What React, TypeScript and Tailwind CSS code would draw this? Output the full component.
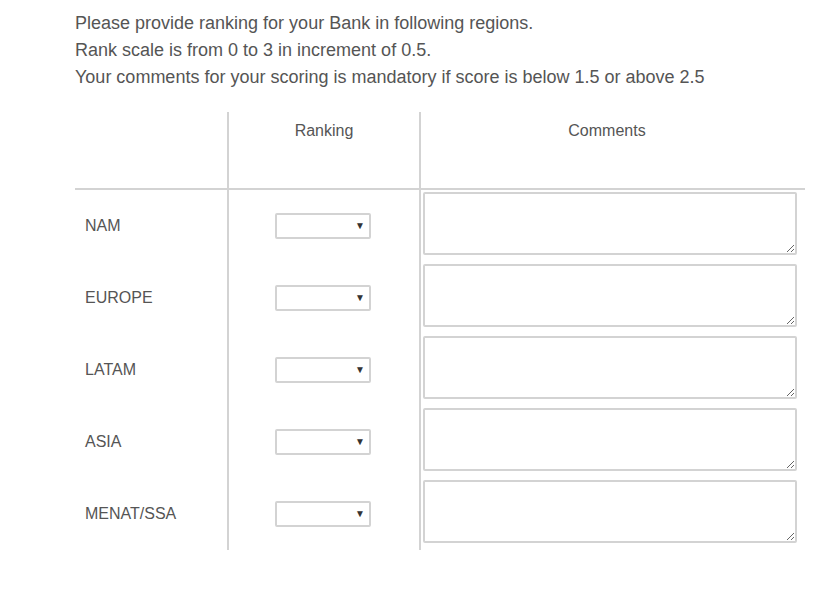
import React from 'react';

const REGIONS = ['NAM', 'EUROPE', 'LATAM', 'ASIA', 'MENAT/SSA'];

export default function App() {
  return (
    <div className="min-h-screen bg-white text-[#555] text-[16px] font-['Liberation_Sans',Arial,sans-serif]">
      <div className="pl-[75px] pt-[10px]">
        {/* Instructions */}
        <div className="text-[18px] leading-[27px]">
          <p>Please provide ranking for your Bank in following regions.</p>
          <p>Rank scale is from 0 to 3 in increment of 0.5.</p>
          <p>Your comments for your scoring is mandatory if score is below 1.5 or above 2.5</p>
        </div>

        {/* Ranking table */}
        <div className="mt-[21px] w-[730px] grid grid-cols-[152px_192px_386px]">
          <div className="h-[78px] border-b-2 border-[#d3d3d3]" />
          <div className="h-[78px] border-b-2 border-l-2 border-[#d3d3d3] pt-[10px] text-center leading-[18px]">
            Ranking
          </div>
          <div className="h-[78px] border-b-2 border-l-2 border-[#d3d3d3] pt-[10px] pr-[12px] text-center leading-[18px]">
            Comments
          </div>

          {REGIONS.map(region => (
            <React.Fragment key={region}>
              <div className="h-[72px] flex items-center pl-[10px]">{region}</div>
              <div className="h-[72px] border-l-2 border-[#d3d3d3] flex items-center justify-center pr-[2px]">
                <div className="relative w-[96px] h-[26px] border-2 border-[#d3d3d3] rounded-[2px] bg-white">
                  <select className="appearance-none w-full h-full bg-transparent outline-none" defaultValue="">
                    <option value=""></option>
                    {['0', '0.5', '1', '1.5', '2', '2.5', '3'].map(v => (
                      <option key={v} value={v}>{v}</option>
                    ))}
                  </select>
                  <span className="absolute right-[4px] top-[5px] text-[10px] leading-[12px] text-[#333] pointer-events-none">▼</span>
                </div>
              </div>
              <div className="h-[72px] border-l-2 border-[#d3d3d3] pl-[2px] pt-[2px]">
                <textarea className="block w-[374px] h-[63px] border-2 border-[#d3d3d3] rounded-[2px] bg-white outline-none" />
              </div>
            </React.Fragment>
          ))}
        </div>
      </div>
    </div>
  );
}
